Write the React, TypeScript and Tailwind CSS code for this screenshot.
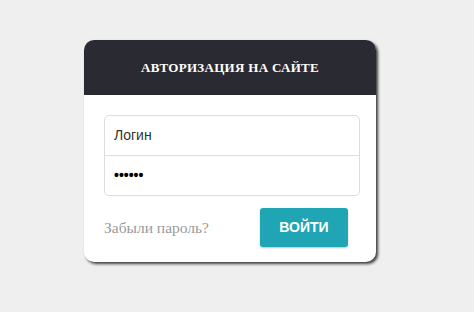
export default function App() {
  return (
    <div className="w-[474px] h-[312px] bg-[#efefef] pt-[40px] pl-[84px]">
      <div className="w-[292px] h-[222px] bg-white rounded-[10px] overflow-hidden shadow-[2px_2px_3px_rgba(0,0,0,0.75)]">
        {/* header */}
        <div className="h-[55px] bg-[#2a2a33] flex items-center justify-center">
          <h1 className="text-white text-[13px] font-bold tracking-[0.3px] font-['Liberation_Serif',serif]">
            АВТОРИЗАЦИЯ НА САЙТЕ
          </h1>
        </div>

        {/* form */}
        <div className="pt-[20px] pl-[20px] pr-[16px]">
          <div className="border border-[#dcdcdc] rounded-[5px]">
            <div className="h-[40px] flex items-center px-[9px] border-b border-[#dcdcdc] text-[14px] text-[#333] font-['Liberation_Sans',Arial,sans-serif]">
              Логин
            </div>
            <div className="h-[39px] flex items-center px-[9px] text-[14px] font-bold text-black font-['Liberation_Sans',Arial,sans-serif]">
              ••••••
            </div>
          </div>

          <div className="flex items-center justify-between mt-[12px] pr-[12px]">
            <a href="#" className="text-[15.5px] text-[#9a9a9a] font-['Liberation_Serif',serif]">
              Забыли пароль?
            </a>
            <button className="w-[88px] h-[39px] bg-[#1fa5b3] rounded-[3px] text-white text-[14px] font-bold font-['Liberation_Sans',Arial,sans-serif] shadow-[0_1px_2px_rgba(0,0,0,0.25)]">
              ВОЙТИ
            </button>
          </div>
        </div>
      </div>
    </div>
  );
}
